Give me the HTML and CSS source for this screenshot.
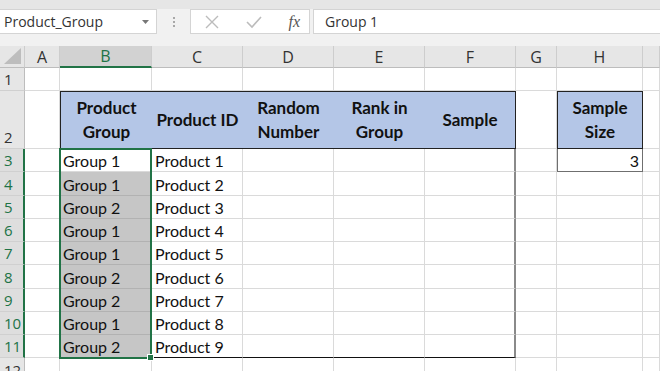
FILE: index.html
```html
<!DOCTYPE html>
<html lang="en">
<head>
    <meta charset="UTF-8">
    <title>Product_Group</title>
    <link rel="stylesheet" href="styles.css">
</head>
<body>

    <!-- Formula bar -->
    <div class="topbar">
        <div class="namebox">
            <span>Product_Group</span>
            <svg class="caret" width="7" height="4" viewBox="0 0 7 4"><path d="M0 0H7L3.5 4Z" fill="#777"/></svg>
        </div>
        <div class="grip"><i></i><i></i><i></i></div>
        <div class="fxbox">
            <svg width="14" height="14" viewBox="0 0 14 14"><path d="M1 1L13 13M13 1L1 13" stroke="#bcbcbc" stroke-width="1.4" fill="none"/></svg>
            <svg width="16" height="14" viewBox="0 0 16 14"><path d="M1 7L6 12L15 2" stroke="#bcbcbc" stroke-width="1.6" fill="none"/></svg>
            <span class="fx">fx</span>
        </div>
        <div class="formula">Group 1</div>
    </div>

    <!-- Sheet -->
    <div class="sheet">
        <div class="hd corner"><svg width="17" height="16" viewBox="0 0 17 16"><path d="M17 0V16H0Z" fill="#bdbdbd"/></svg></div>
        <div class="hd">A</div>
        <div class="hd col-sel">B</div>
        <div class="hd">C</div>
        <div class="hd">D</div>
        <div class="hd">E</div>
        <div class="hd">F</div>
        <div class="hd">G</div>
        <div class="hd">H</div>
        <div class="hd"></div>

        <!-- row 1 -->
        <div class="rh">1</div>
        <div class="c"></div><div class="c"></div><div class="c"></div><div class="c"></div>
        <div class="c"></div><div class="c"></div><div class="c"></div><div class="c"></div><div class="c"></div>

        <!-- row 2: table headers -->
        <div class="rh tall">2</div>
        <div class="c"></div>
        <div class="th first">Product<br>Group</div>
        <div class="th">Product ID</div>
        <div class="th">Random<br>Number</div>
        <div class="th">Rank in<br>Group</div>
        <div class="th last">Sample</div>
        <div class="c"></div>
        <div class="th solo">Sample<br>Size</div>
        <div class="c"></div>

        <!-- row 3 -->
        <div class="rh sel">3</div>
        <div class="c"></div>
        <div class="c txt active">Group 1<div class="selection"><span class="handle"></span></div></div>
        <div class="c txt">Product 1</div>
        <div class="c"></div><div class="c"></div>
        <div class="c edge"></div>
        <div class="c"></div>
        <div class="c num boxed">3</div>
        <div class="c"></div>

        <!-- row 4 -->
        <div class="rh sel">4</div>
        <div class="c"></div>
        <div class="c txt grey">Group 1</div>
        <div class="c txt">Product 2</div>
        <div class="c"></div><div class="c"></div>
        <div class="c edge"></div>
        <div class="c"></div><div class="c"></div><div class="c"></div>

        <!-- row 5 -->
        <div class="rh sel">5</div>
        <div class="c"></div>
        <div class="c txt grey">Group 2</div>
        <div class="c txt">Product 3</div>
        <div class="c"></div><div class="c"></div>
        <div class="c edge"></div>
        <div class="c"></div><div class="c"></div><div class="c"></div>

        <!-- row 6 -->
        <div class="rh sel">6</div>
        <div class="c"></div>
        <div class="c txt grey">Group 1</div>
        <div class="c txt">Product 4</div>
        <div class="c"></div><div class="c"></div>
        <div class="c edge"></div>
        <div class="c"></div><div class="c"></div><div class="c"></div>

        <!-- row 7 -->
        <div class="rh sel">7</div>
        <div class="c"></div>
        <div class="c txt grey">Group 1</div>
        <div class="c txt">Product 5</div>
        <div class="c"></div><div class="c"></div>
        <div class="c edge"></div>
        <div class="c"></div><div class="c"></div><div class="c"></div>

        <!-- row 8 -->
        <div class="rh sel">8</div>
        <div class="c"></div>
        <div class="c txt grey">Group 2</div>
        <div class="c txt">Product 6</div>
        <div class="c"></div><div class="c"></div>
        <div class="c edge"></div>
        <div class="c"></div><div class="c"></div><div class="c"></div>

        <!-- row 9 -->
        <div class="rh sel">9</div>
        <div class="c"></div>
        <div class="c txt grey">Group 2</div>
        <div class="c txt">Product 7</div>
        <div class="c"></div><div class="c"></div>
        <div class="c edge"></div>
        <div class="c"></div><div class="c"></div><div class="c"></div>

        <!-- row 10 -->
        <div class="rh sel">10</div>
        <div class="c"></div>
        <div class="c txt grey">Group 1</div>
        <div class="c txt">Product 8</div>
        <div class="c"></div><div class="c"></div>
        <div class="c edge"></div>
        <div class="c"></div><div class="c"></div><div class="c"></div>

        <!-- row 11 -->
        <div class="rh sel">11</div>
        <div class="c"></div>
        <div class="c txt grey">Group 2</div>
        <div class="c txt bottom">Product 9</div>
        <div class="c bottom"></div><div class="c bottom"></div>
        <div class="c edge bottom"></div>
        <div class="c"></div><div class="c"></div><div class="c"></div>

        <!-- row 12 -->
        <div class="rh">12</div>
        <div class="c"></div><div class="c"></div><div class="c"></div><div class="c"></div>
        <div class="c"></div><div class="c"></div><div class="c"></div><div class="c"></div><div class="c"></div>
    </div>

</body>
</html>
```

FILE: styles.css
```css
body {
    margin: 0;
    width: 660px;
    height: 371px;
    overflow: hidden;
    background-color: #ffffff;
    font-family: Lato, "Liberation Sans", sans-serif;
}

/* Thanh công thức */
.topbar {
    display: flex;
    align-items: center;
    height: 46px;
    padding-bottom: 12px;
    box-sizing: border-box;
    background-color: #f1f1f1;
    border-top: 9px solid #e6e6e6;
    font-family: "Open Sans", sans-serif;
    color: #333;
    font-size: 14px;
}

.namebox {
    display: flex;
    align-items: center;
    justify-content: space-between;
    width: 157px;
    height: 25px;
    box-sizing: border-box;
    padding: 0 7px 0 4px;
    background: #fff;
    border: 1px solid #d4d4d4;
    border-left: none;
}

.grip {
    display: flex;
    flex-direction: column;
    gap: 2px;
    width: 33px;
    align-items: center;
}

.grip i {
    width: 2px;
    height: 2px;
    background: #a8a8a8;
}

.fxbox {
    display: flex;
    align-items: center;
    justify-content: space-between;
    width: 120px;
    height: 25px;
    box-sizing: border-box;
    padding: 0 9px 0 14px;
    background: #fff;
    border: 1px solid #d4d4d4;
}

.fx {
    font-family: "Liberation Serif", serif;
    font-style: italic;
    font-size: 16px;
    color: #555;
}

.formula {
    flex: 1;
    height: 25px;
    box-sizing: border-box;
    margin-left: 3px;
    padding: 2px 11px;
    background: #fff;
    border: 1px solid #d4d4d4;
    border-right: none;
}

/* Bảng tính */
.sheet {
    display: grid;
    grid-template-columns: 25px 35px 92px 91px 91px 91px 91px 41px 86px 1fr;
    grid-template-rows: 22px 23px 58px repeat(9, 23.25px) 24px;
    font-size: 16px;
    color: #111;
}

.hd {
    display: flex;
    align-items: center;
    justify-content: center;
    background: #e6e6e6;
    border-right: 1px solid #cdcdcd;
    border-bottom: 1px solid #bdbdbd;
    font-family: "Open Sans", sans-serif;
    font-size: 16px;
    color: #333;
}

.corner {
    justify-content: flex-end;
    align-items: flex-end;
    padding: 0 3px 3px 0;
}

.col-sel {
    background: #d2d2d2;
    color: #217346;
    border-bottom: 2px solid #217346;
}

.rh {
    display: flex;
    align-items: flex-end;
    padding: 0 0 1px 4px;
    background: #e6e6e6;
    border-right: 1px solid #bdbdbd;
    border-bottom: 1px solid #d0d0d0;
    font-family: "Open Sans", sans-serif;
    font-size: 15px;
    color: #333;
}

.rh.sel {
    background: #dedede;
    color: #217346;
    border-right: 2px solid #217346;
}

.c {
    border-right: 1px solid #dadada;
    border-bottom: 1px solid #dadada;
    min-width: 0;
}

.txt {
    display: flex;
    align-items: flex-end;
    padding: 0 0 1px 3px;
    white-space: nowrap;
}

.num {
    display: flex;
    align-items: flex-end;
    justify-content: flex-end;
    padding: 0 3px 1px 0;
}

.grey {
    background: #c6c6c6;
    border-bottom-color: #b2b2b2;
}

.edge {
    border-right: 2px solid #8a8a8a;
}

.bottom {
    border-bottom: 1px solid #111;
}

.boxed {
    border: 1px solid #6f6f6f;
    border-top: none;
}

/* Tiêu đề bảng */
.th {
    display: flex;
    align-items: center;
    justify-content: center;
    text-align: center;
    line-height: 24px;
    font-size: 17px;
    font-weight: bold;
    background: #b4c6e7;
    border-top: 1px solid #222;
    border-bottom: 1px solid #222;
}

.th.first { border-left: 1px solid #222; }
.th.last { border-right: 1px solid #222; }
.th.solo { border: 1px solid #222; }

/* Vùng chọn B3:B11 */
.active {
    position: relative;
}

.selection {
    position: absolute;
    left: -1px;
    top: -1px;
    width: 93px;
    height: 211px;
    box-sizing: border-box;
    border: 2px solid #217346;
    pointer-events: none;
}

.handle {
    position: absolute;
    right: -4px;
    bottom: -4px;
    width: 5px;
    height: 5px;
    background: #217346;
    border: 1px solid #fff;
}
```
